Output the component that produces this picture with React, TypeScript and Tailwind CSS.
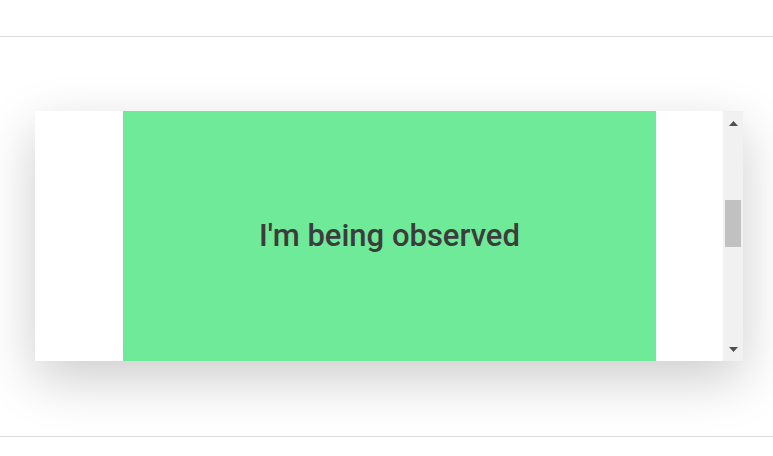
export default function App() {
  return (
    <div className="min-h-screen bg-white font-['Roboto',sans-serif]">
      <header className="h-[37px] border-b border-[#dddddd]" />

      {/* observed box */}
      <section className="h-[400px] pt-[74px] flex items-start border-b border-[#dddddd]">
        <div className="ml-[35px] w-[708px] h-[250px] flex bg-white shadow-[0_18px_50px_rgba(0,0,0,0.2)]">
          <div className="flex-1 flex pl-[88px] pr-[67px]">
            <div className="flex-1 flex items-center justify-center bg-[#6eea99]">
              <span className="text-[31px] font-medium text-[#3c3c3c]">I'm being observed</span>
            </div>
          </div>
          <div className="w-[20px] flex flex-col bg-[#f1f1f1]">
            <div className="h-[24px] flex items-center justify-center">
              <svg width="9" height="5" viewBox="0 0 9 5">
                <path d="M4.5 0L9 5H0z" fill="#505050" />
              </svg>
            </div>
            <div className="flex-1 flex flex-col px-[2px]">
              <div className="h-[65px]" />
              <div className="h-[47px] bg-[#c1c1c1]" />
            </div>
            <div className="h-[24px] flex items-center justify-center">
              <svg width="9" height="5" viewBox="0 0 9 5">
                <path d="M0 0H9L4.5 5z" fill="#505050" />
              </svg>
            </div>
          </div>
        </div>
      </section>
    </div>
  )
}
